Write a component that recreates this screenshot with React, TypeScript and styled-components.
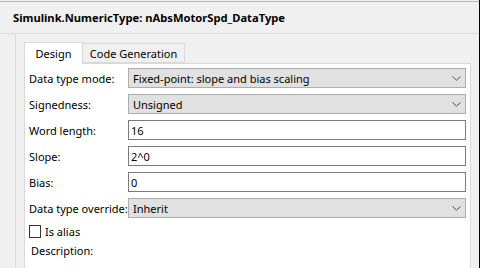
import { Fragment } from "react";
import styled, { createGlobalStyle } from "styled-components";

const GlobalStyle = createGlobalStyle`
  html, body {
    margin: 0;
    padding: 0;
    background: #f0f0f0;
  }
  * {
    box-sizing: border-box;
  }
`;

const Window = styled.div`
  width: 480px;
  height: 268px;
  overflow: hidden;
  background: #f0f0f0;
  border-right: 1px solid #000;
  padding-top: 1px;
  font: 400 11px "Noto Sans", "Open Sans", sans-serif;
  color: #000;
`;

const Header = styled.div`
  height: 33px;
  border-top: 1px solid #b9b9b9;
  border-bottom: 1px solid #d9d9d9;
  display: flex;
  align-items: center;
  padding-left: 13px;
`;

const Title = styled.h1`
  margin: 0;
  font: 700 11.2px "Noto Sans", "Open Sans", sans-serif;
  color: #000;
`;

const Body = styled.div`
  padding-left: 15px;
`;

const Group = styled.div`
  border-left: 1px solid #dcdcdc;
  padding: 8px 0 0 8px;
  height: 240px;
`;

const TabBar = styled.div`
  display: flex;
  align-items: flex-end;
  height: 21px;
`;

const Tab = styled.div<{ $active?: boolean; $width: number }>`
  width: ${(p) => p.$width}px;
  height: ${(p) => (p.$active ? 22 : 20)}px;
  margin-bottom: ${(p) => (p.$active ? -1 : 0)}px;
  position: relative;
  background: ${(p) => (p.$active ? "#fff" : "#f0f0f0")};
  border: 1px solid #d9d9d9;
  border-bottom: ${(p) => (p.$active ? "none" : "1px solid #d9d9d9")};
  border-left: ${(p) => (p.$active ? "1px solid #d9d9d9" : "none")};
  display: flex;
  align-items: center;
  justify-content: center;
  padding-bottom: ${(p) => (p.$active ? 1 : 0)}px;
`;

const Pane = styled.div`
  width: 447px;
  height: 220px;
  background: #fff;
  border: 1px solid #d9d9d9;
  padding: 4px 4px 0 4px;
`;

const Form = styled.div`
  display: grid;
  grid-template-columns: 99px 338px;
  row-gap: 6px;
  align-items: center;
`;

const Label = styled.div`
  white-space: nowrap;
`;

const Select = styled.div`
  height: 20px;
  background: #e1e1e1;
  border: 1px solid #adadad;
  display: flex;
  align-items: center;
  justify-content: space-between;
  padding: 0 4px 0 4px;
`;

const Input = styled.div`
  height: 20px;
  background: #fff;
  border: 1px solid #7a7a7a;
  display: flex;
  align-items: center;
  padding: 0 2px;
`;

const CheckRow = styled.label`
  display: flex;
  align-items: center;
  gap: 4px;
  margin-top: 7px;
  height: 13px;
`;

const Box = styled.span`
  width: 12px;
  height: 13px;
  border: 1px solid #333;
  background: #fff;
`;

const Description = styled.div`
  margin-top: 5px;
  padding-left: 2px;
`;

const Chevron = () => (
  <svg width="9" height="5" viewBox="0 0 9 5">
    <path d="M0.5 0.5 L4.5 4.2 L8.5 0.5" fill="none" stroke="#4d4d4d" strokeWidth="1" />
  </svg>
);

const rows: { label: string; value: string; kind: "select" | "input" }[] = [
  { label: "Data type mode:", value: "Fixed-point: slope and bias scaling", kind: "select" },
  { label: "Signedness:", value: "Unsigned", kind: "select" },
  { label: "Word length:", value: "16", kind: "input" },
  { label: "Slope:", value: "2^0", kind: "input" },
  { label: "Bias:", value: "0", kind: "input" },
  { label: "Data type override:", value: "Inherit", kind: "select" },
];

export default function App() {
  return (
    <>
      <GlobalStyle />
      <Window>
        <Header>
          <Title>Simulink.NumericType: nAbsMotorSpd_DataType</Title>
        </Header>
        <Body>
          <Group>
            <TabBar>
              <Tab $active $width={59}>Design</Tab>
              <Tab $width={102}>Code Generation</Tab>
            </TabBar>
            <Pane>
              <Form>
                {rows.map((r) => (
                  <Fragment key={r.label}>
                    <Label>{r.label}</Label>
                    {r.kind === "select" ? (
                      <Select>
                        <span>{r.value}</span>
                        <Chevron />
                      </Select>
                    ) : (
                      <Input>{r.value}</Input>
                    )}
                  </Fragment>
                ))}
              </Form>
              <CheckRow>
                <Box />
                Is alias
              </CheckRow>
              <Description>Description:</Description>
            </Pane>
          </Group>
        </Body>
      </Window>
    </>
  );
}
